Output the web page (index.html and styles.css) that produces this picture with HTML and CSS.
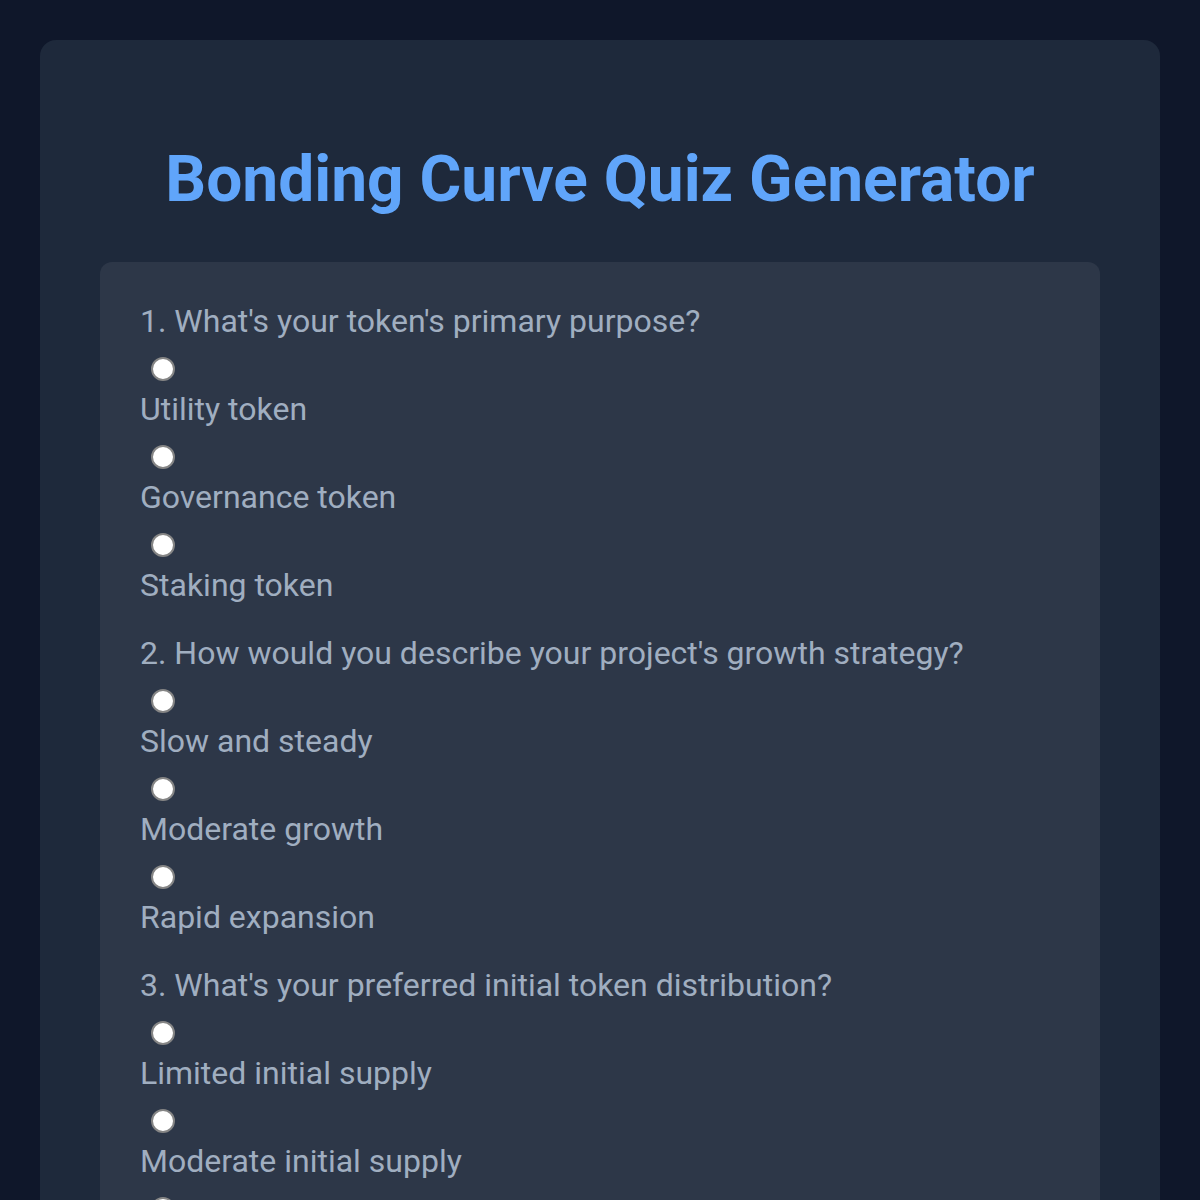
FILE: index.html
```html
<!DOCTYPE html>
<html lang="en">
<head>
  <meta charset="UTF-8">
  <meta name="viewport" content="width=device-width, initial-scale=1.0">
  <title>Bonding Curve Quiz Generator</title>
  <link rel="stylesheet" href="styles.css">
</head>
<body>
  <!-- Main Container -->
  <section class="container">
    <h1>Bonding Curve Quiz Generator</h1>

    <!-- Quiz Box -->
    <div class="quiz-box">
      <div class="question">
        <p>1. What's your token's primary purpose?</p>
        <div class="option">
          <input type="radio" name="q1" id="q1a" value="utility">
          <label for="q1a">Utility token</label>
        </div>
        <div class="option">
          <input type="radio" name="q1" id="q1b" value="governance">
          <label for="q1b">Governance token</label>
        </div>
        <div class="option">
          <input type="radio" name="q1" id="q1c" value="staking">
          <label for="q1c">Staking token</label>
        </div>
      </div>

      <div class="question">
        <p>2. How would you describe your project's growth strategy?</p>
        <div class="option">
          <input type="radio" name="q2" id="q2a" value="slow">
          <label for="q2a">Slow and steady</label>
        </div>
        <div class="option">
          <input type="radio" name="q2" id="q2b" value="moderate">
          <label for="q2b">Moderate growth</label>
        </div>
        <div class="option">
          <input type="radio" name="q2" id="q2c" value="rapid">
          <label for="q2c">Rapid expansion</label>
        </div>
      </div>

      <div class="question">
        <p>3. What's your preferred initial token distribution?</p>
        <div class="option">
          <input type="radio" name="q3" id="q3a" value="limited">
          <label for="q3a">Limited initial supply</label>
        </div>
        <div class="option">
          <input type="radio" name="q3" id="q3b" value="moderate">
          <label for="q3b">Moderate initial supply</label>
        </div>
        <div class="option">
          <input type="radio" name="q3" id="q3c" value="large">
          <label for="q3c">Large initial supply</label>
        </div>
      </div>
    </div>
  </section>
</body>
</html>
```

FILE: styles.css
```css
body {
  font-family: Roboto, "Liberation Sans", sans-serif;
  margin: 0;
  padding: 40px;
  background-color: #0f172a;
  color: #a0aec0;
}
.container {
  background-color: #1e293b;
  border-radius: 16px;
  padding: 60px 60px 40px;
}
.container h1 {
  margin: 40px 0 42px;
  text-align: center;
  font-size: 64px;
  line-height: 80px;
  font-weight: 700;
  color: #60a5fa;
}
.quiz-box {
  background-color: #2d3748;
  border-radius: 12px;
  padding: 40px;
}
.question {
  margin-bottom: 30px;
}
.question p {
  margin: 0;
  font-size: 32px;
  line-height: 38px;
}
.option {
  margin-top: 17px;
}
.option input {
  appearance: none;
  display: block;
  width: 24px;
  height: 24px;
  margin: 0 0 0 11px;
  background-color: #fff;
  border: 2px solid #858585;
  border-radius: 50%;
  box-sizing: border-box;
}
.option label {
  display: block;
  margin-top: 9px;
  font-size: 32px;
  line-height: 38px;
}
```
